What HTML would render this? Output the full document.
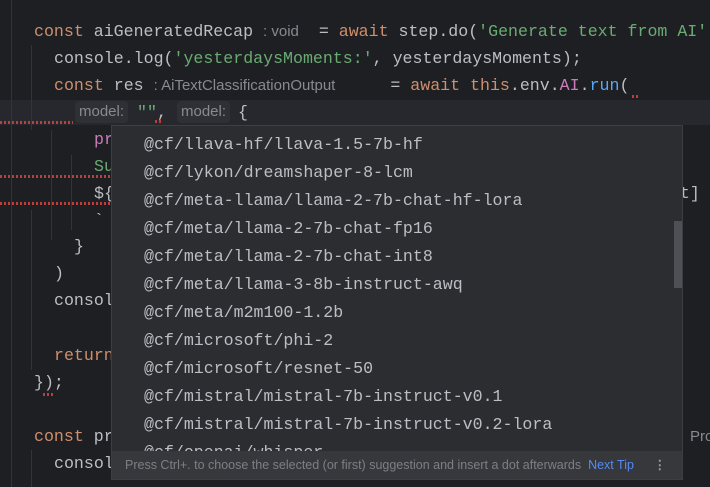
<!DOCTYPE html>
<html><head><meta charset="utf-8"><style>
body{margin:0;width:710px;height:487px;background:#1e1f22;overflow:hidden;position:relative;font-family:"Liberation Mono","DejaVu Sans Mono",monospace;font-size:16.6px;color:#bcbec4}
.l{position:absolute;white-space:pre;line-height:20px;height:20px}
.k{color:#cf8e6d}.s{color:#6aab73}.h{font-family:"Liberation Sans",sans-serif;font-size:15px;color:#868a91}
.p{color:#c77dbb}.f{color:#56a8f5}
.chip{position:absolute;top:-2px;height:22px;line-height:22px;font-family:"Liberation Sans",sans-serif;font-size:15px;color:#868a91;background:#2e3034;border-radius:4px;padding:0 4px}
.a{position:absolute;top:0}
.g{position:absolute;width:1px;background:#313438}
.w{position:absolute;height:3px;background:repeating-linear-gradient(90deg,#bc3f3c 0 2px,transparent 2px 4px)}
#pop{position:absolute;left:111px;top:125px;width:572px;height:355px;background:#2b2d30;border:1px solid #3c3e42;box-sizing:border-box;overflow:hidden}
.it{position:absolute;left:32px;white-space:pre;line-height:20px}
#ft{position:absolute;left:0;right:0;bottom:0;height:28px;background:#36383c;font-family:"Liberation Sans",sans-serif;font-size:12.5px;color:#7c7f85;line-height:28px;padding-left:13px;white-space:pre}
</style></head><body>
<div style="position:absolute;left:0;right:0;top:100px;height:25px;background:#26282d"></div>
<div class="g" style="left:11px;top:0;height:487px"></div>
<div class="g" style="left:31px;top:45px;height:85px"></div>
<div class="g" style="left:31px;top:210px;height:160px"></div>
<div class="g" style="left:31px;top:450px;height:37px"></div>
<div class="g" style="left:51px;top:130px;height:110px"></div>
<div class="g" style="left:71px;top:155px;height:75px"></div>

<div class="l" style="left:34px;top:22px"><span class="k">const</span> aiGeneratedRecap <span class="h">: void</span>  = <span class="k">await</span> step.do(<span class="s">'Generate text from AI'</span></div>
<div class="l" style="left:54px;top:49px">console.log(<span class="s">'yesterdaysMoments:'</span>, yesterdaysMoments);</div>
<div class="l" style="left:54px;top:76px"><span class="k">const</span> res <span class="h">: AiTextClassificationOutput</span><span style="display:inline-block;width:55px"></span>= <span class="k">await this</span>.env.<span class="p">AI</span>.<span class="f">run</span>(</div>
<div class="l" style="left:0;top:103px;width:710px"><span class="chip" style="left:75px">model:</span><span class="a s" style="left:137px">""</span><span class="a" style="left:157px">,</span><span class="chip" style="left:177px">model:</span><span class="a" style="left:238px">{</span></div>
<div class="l p" style="left:94px;top:130px">pr</div>
<div class="l s" style="left:94px;top:157px">Su</div>
<div class="l" style="left:94px;top:184px">${</div>
<div class="l" style="left:660px;top:184px">ext]</div>
<div class="l" style="left:94px;top:211px">`</div>
<div class="l" style="left:74px;top:237px">}</div>
<div class="l" style="left:54px;top:264px">)</div>
<div class="l" style="left:54px;top:291px">consol</div>
<div class="l k" style="left:54px;top:346px">return</div>
<div class="l" style="left:34px;top:373px">});</div>
<div class="l" style="left:34px;top:427px"><span class="k">const</span> pr</div>
<div class="l" style="left:54px;top:454px">consol</div>
<div class="l h" style="left:690px;top:427px">Pro</div>

<div class="w" style="left:0;top:121px;width:73px"></div>
<div class="w" style="left:155px;top:120px;width:8px"></div>
<div class="w" style="left:0;top:175px;width:111px"></div>
<div class="w" style="left:0;top:202px;width:111px"></div>
<div class="w" style="left:632px;top:95px;width:8px"></div>
<div class="w" style="left:43px;top:393px;width:10px"></div>

<div id="pop">
<div class="it" style="top:9px">@cf/llava-hf/llava-1.5-7b-hf</div>
<div class="it" style="top:37px">@cf/lykon/dreamshaper-8-lcm</div>
<div class="it" style="top:65px">@cf/meta-llama/llama-2-7b-chat-hf-lora</div>
<div class="it" style="top:93px">@cf/meta/llama-2-7b-chat-fp16</div>
<div class="it" style="top:121px">@cf/meta/llama-2-7b-chat-int8</div>
<div class="it" style="top:149px">@cf/meta/llama-3-8b-instruct-awq</div>
<div class="it" style="top:177px">@cf/meta/m2m100-1.2b</div>
<div class="it" style="top:205px">@cf/microsoft/phi-2</div>
<div class="it" style="top:233px">@cf/microsoft/resnet-50</div>
<div class="it" style="top:261px">@cf/mistral/mistral-7b-instruct-v0.1</div>
<div class="it" style="top:289px">@cf/mistral/mistral-7b-instruct-v0.2-lora</div>
<div class="it" style="top:317px">@cf/openai/whisper</div>
<div style="position:absolute;left:562px;top:95px;width:8px;height:67px;background:#4d5055"></div>
<div id="ft">Press Ctrl+. to choose the selected (or first) suggestion and insert a dot afterwards  <span style="color:#548af7">Next Tip</span><span style="position:absolute;right:16px;color:#9a9da2;font-weight:bold">⋮</span></div>
</div>
</body></html>
